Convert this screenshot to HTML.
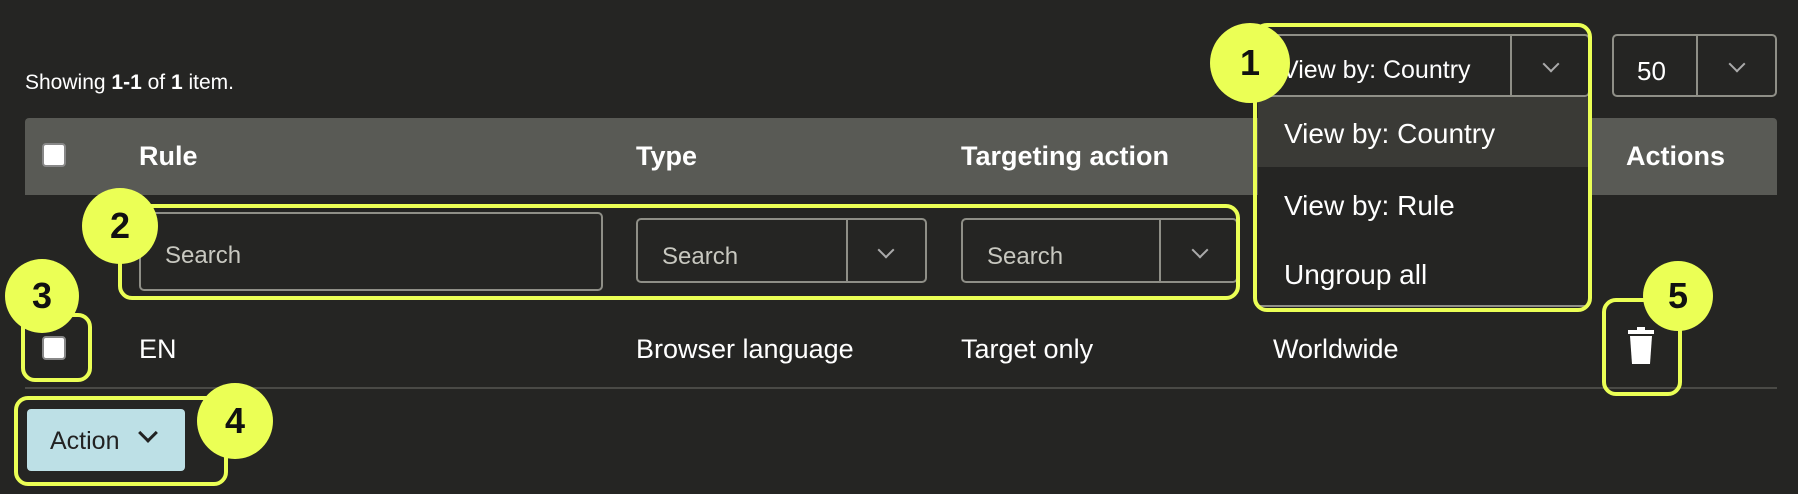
<!DOCTYPE html>
<html><head><style>
*{box-sizing:border-box;margin:0;padding:0}
body{width:1798px;height:494px;background:#252523;position:relative;overflow:hidden;font-family:"Liberation Sans",sans-serif;color:#fff}
.a{position:absolute}
.sel{border:2px solid #8f8f87;border-radius:5px}
.y{position:absolute;border:4px solid #ebff55;border-radius:14px}
.c{position:absolute;background:#ebff55;border-radius:50%;color:#111;font-weight:bold;font-size:36px;display:flex;align-items:center;justify-content:center}
.cb{position:absolute;width:24px;height:24px;background:#fff;border-radius:4px;border:2px solid #888}
.chev{position:absolute;width:12px;height:12px;border-right:2px solid #aaa;border-bottom:2px solid #aaa;transform:rotate(45deg)}
.t{position:absolute;font-size:27px;white-space:nowrap}
</style></head><body>
<div class="t" style="left:25px;top:71px;font-size:21px">Showing <b>1-1</b> of <b>1</b> item.</div>
<div class="a" style="left:25px;top:118px;width:1752px;height:77px;background:#595a55;border-radius:4px 4px 0 0"></div>
<div class="cb" style="left:42px;top:143px"></div>
<div class="t" style="left:139px;top:141px;font-weight:bold">Rule</div>
<div class="t" style="left:636px;top:141px;font-weight:bold">Type</div>
<div class="t" style="left:961px;top:141px;font-weight:bold">Targeting action</div>
<div class="t" style="left:1626px;top:141px;font-weight:bold">Actions</div>

<div class="a sel" style="left:139px;top:212px;width:464px;height:79px"></div>
<div class="t" style="left:165px;top:242px;color:#c8c8c0;font-size:24px">Search</div>
<div class="a sel" style="left:636px;top:218px;width:291px;height:65px"></div>
<div class="a" style="left:846px;top:218px;width:2px;height:65px;background:#8f8f87"></div>
<div class="t" style="left:662px;top:243px;color:#c8c8c0;font-size:24px">Search</div>
<div class="chev" style="left:880px;top:244px"></div>
<div class="a sel" style="left:961px;top:218px;width:277px;height:65px"></div>
<div class="a" style="left:1159px;top:218px;width:2px;height:65px;background:#8f8f87"></div>
<div class="t" style="left:987px;top:243px;color:#c8c8c0;font-size:24px">Search</div>
<div class="chev" style="left:1194px;top:244px"></div>

<div class="cb" style="left:42px;top:336px"></div>
<div class="t" style="left:139px;top:334px">EN</div>
<div class="t" style="left:636px;top:334px">Browser language</div>
<div class="t" style="left:961px;top:334px">Target only</div>
<div class="t" style="left:1273px;top:334px">Worldwide</div>
<svg class="a" style="left:1627px;top:327px" width="28" height="38" viewBox="0 0 28 38"><rect x="1" y="3" width="26" height="4" fill="#fff"/><rect x="10" y="0" width="8" height="4" fill="#fff"/><path d="M3 9h22l-2 28H5z" fill="#fff"/></svg>
<div class="a" style="left:25px;top:387px;width:1752px;height:2px;background:#4a4a46"></div>

<div class="a" style="left:27px;top:409px;width:158px;height:62px;background:#bde0e6;border-radius:4px"></div>
<div class="t" style="left:50px;top:427px;color:#222;font-size:25px">Action</div>
<div class="chev" style="left:141px;top:426px;border-color:#222;width:14px;height:14px;border-width:3px"></div>

<div class="a sel" style="left:1258px;top:34px;width:332px;height:63px"></div>
<div class="a" style="left:1510px;top:34px;width:2px;height:63px;background:#8f8f87"></div>
<div class="t" style="left:1282px;top:56px;font-size:25px">View by: Country</div>
<div class="chev" style="left:1545px;top:58px"></div>
<div class="a sel" style="left:1612px;top:34px;width:165px;height:63px"></div>
<div class="a" style="left:1696px;top:34px;width:2px;height:63px;background:#8f8f87"></div>
<div class="t" style="left:1637px;top:56px;font-size:26px">50</div>
<div class="chev" style="left:1731px;top:58px"></div>

<div class="a" style="left:1258px;top:97px;width:331px;height:210px;background:#252523;border-bottom:2px solid #8f8f87"></div>
<div class="a" style="left:1258px;top:97px;width:331px;height:70px;background:#3a3a36"></div>
<div class="t" style="left:1284px;top:118px;font-size:28px">View by: Country</div>
<div class="t" style="left:1284px;top:190px;font-size:28px">View by: Rule</div>
<div class="t" style="left:1284px;top:259px;font-size:28px">Ungroup all</div>

<div class="y" style="left:1253px;top:23px;width:339px;height:289px"></div>
<div class="y" style="left:118px;top:204px;width:1122px;height:96px"></div>
<div class="y" style="left:21px;top:313px;width:71px;height:69px"></div>
<div class="y" style="left:14px;top:396px;width:214px;height:90px"></div>
<div class="y" style="left:1602px;top:298px;width:80px;height:98px"></div>
<div class="c" style="left:1210px;top:23px;width:80px;height:80px">1</div>
<div class="c" style="left:82px;top:188px;width:76px;height:76px">2</div>
<div class="c" style="left:5px;top:259px;width:74px;height:74px">3</div>
<div class="c" style="left:197px;top:383px;width:76px;height:76px">4</div>
<div class="c" style="left:1643px;top:261px;width:70px;height:70px">5</div>
</body></html>
